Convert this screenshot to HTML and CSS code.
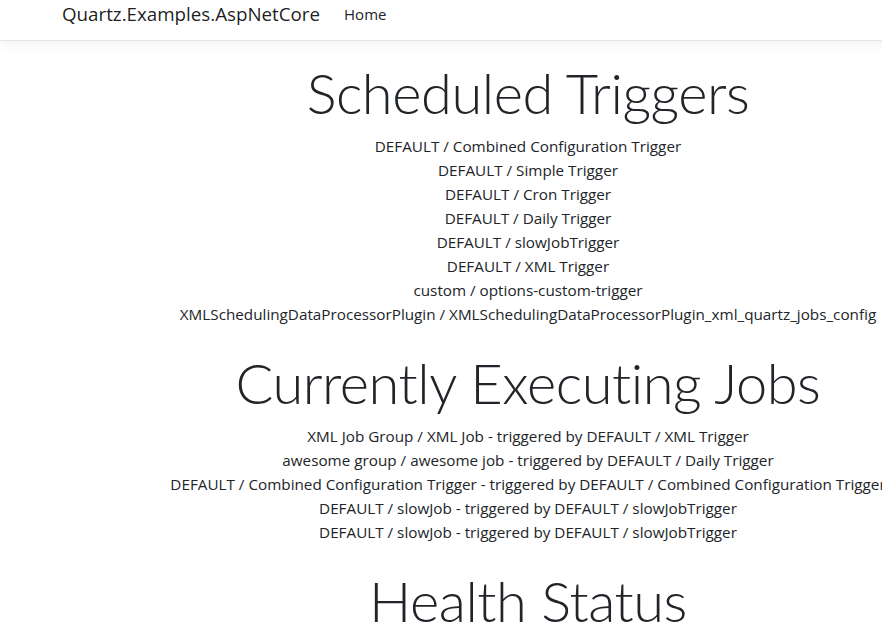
FILE: index.html
```html
<!DOCTYPE html>
<html lang="en">
<head>
<meta charset="utf-8">
<title>Quartz.Examples.AspNetCore</title>
<link rel="stylesheet" href="styles.css">
</head>
<body>
<div class="page">
  <header class="navbar">
    <div class="nav-container">
      <a class="brand" href="#">Quartz.Examples.AspNetCore</a>
      <a class="nav-link" href="#">Home</a>
    </div>
  </header>
  <main class="container">
    <section class="block">
      <h1 class="display">Scheduled Triggers</h1>
      <div class="item">DEFAULT / Combined Configuration Trigger</div>
      <div class="item">DEFAULT / Simple Trigger</div>
      <div class="item">DEFAULT / Cron Trigger</div>
      <div class="item">DEFAULT / Daily Trigger</div>
      <div class="item">DEFAULT / slowJobTrigger</div>
      <div class="item">DEFAULT / XML Trigger</div>
      <div class="item">custom / options-custom-trigger</div>
      <div class="item">XMLSchedulingDataProcessorPlugin / XMLSchedulingDataProcessorPlugin_xml_quartz_jobs_config</div>
    </section>
    <section class="block">
      <h1 class="display">Currently Executing Jobs</h1>
      <div class="item">XML Job Group / XML Job - triggered by DEFAULT / XML Trigger</div>
      <div class="item">awesome group / awesome job - triggered by DEFAULT / Daily Trigger</div>
      <div class="item">DEFAULT / Combined Configuration Trigger - triggered by DEFAULT / Combined Configuration Trigger</div>
      <div class="item">DEFAULT / slowJob - triggered by DEFAULT / slowJobTrigger</div>
      <div class="item">DEFAULT / slowJob - triggered by DEFAULT / slowJobTrigger</div>
    </section>
    <section class="block">
      <h1 class="display">Health Status</h1>
    </section>
  </main>
</div>
</body>
</html>
```
FILE: styles.css
```css
html, body {
  margin: 0;
  padding: 0;
  overflow: hidden;
  background: #fff;
}
body {
  font-family: "Open Sans", "Noto Sans", sans-serif;
  color: #212529;
  font-size: 15.25px;
  line-height: 24px;
}
.page {
  width: 1056px;
}
.navbar {
  height: 40px;
  border-bottom: 1px solid #e5e5e5;
  box-shadow: 0 4px 12px rgba(0, 0, 0, 0.05);
  background: #fff;
}
.nav-container {
  width: 960px;
  margin: 0 auto;
  padding: 0 15px;
  box-sizing: border-box;
  display: flex;
  align-items: center;
  height: 28px;
}
.brand {
  font-size: 18.75px;
  line-height: 28px;
  color: rgba(0, 0, 0, 0.9);
  text-decoration: none;
  margin-right: 24px;
  margin-left: -1px;
}
.nav-link {
  font-size: 15px;
  color: #212529;
  text-decoration: none;
}
.container {
  width: 960px;
  margin: 0 auto;
  padding: 16px 15px 0;
  box-sizing: border-box;
  text-align: center;
  display: flex;
  flex-direction: column;
  gap: 21px;
}
.display {
  font-family: "Lato", "Open Sans", sans-serif;
  font-size: 56px;
  font-weight: 300;
  letter-spacing: -0.45px;
  font-variant-ligatures: none;
  line-height: 72px;
  margin: 0 0 5px;
  white-space: nowrap;
}
.item {
  white-space: nowrap;
}
```
